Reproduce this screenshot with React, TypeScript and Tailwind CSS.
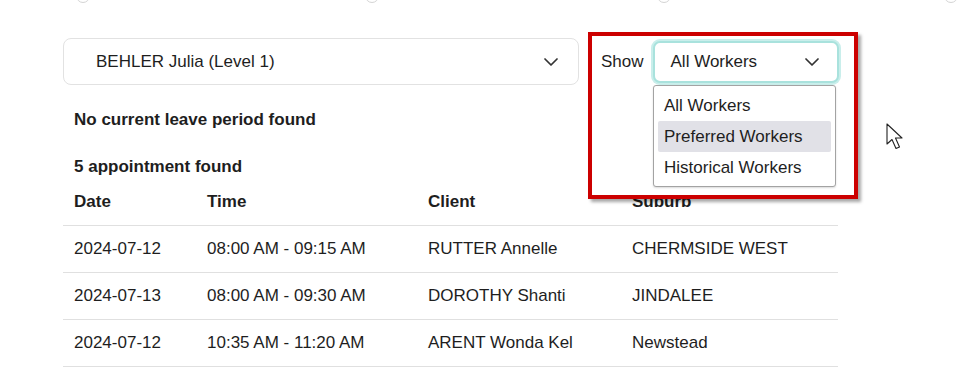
import React from "react";

const Chevron = () => (
  <svg width="14" height="8" viewBox="0 0 14 8" fill="none">
    <polyline points="1,1 7,7 13,1" stroke="#333" strokeWidth="1.7" strokeLinecap="round" strokeLinejoin="round" />
  </svg>
);

const rows = [
  ["2024-07-12", "08:00 AM - 09:15 AM", "RUTTER Annelle", "CHERMSIDE WEST"],
  ["2024-07-13", "08:00 AM - 09:30 AM", "DOROTHY Shanti", "JINDALEE"],
  ["2024-07-12", "10:35 AM - 11:20 AM", "ARENT Wonda Kel", "Newstead"],
];

export default function App() {
  return (
    <div
      className="relative w-[959px] h-[371px] bg-white overflow-hidden text-[#1e1e1e] text-[17px]"
      style={{ fontFamily: '"Liberation Sans", Arial, sans-serif' }}
    >
      {/* top cut-off controls */}
      <div className="absolute top-[-11px] left-[76px] w-[14px] h-[14px] rounded-full border border-[#d4d4d4]" />
      <div className="absolute top-[-11px] left-[365px] w-[14px] h-[14px] rounded-full border border-[#d4d4d4]" />
      <div className="absolute top-[-11px] left-[657px] w-[14px] h-[14px] rounded-full border border-[#d4d4d4]" />
      <div className="absolute top-[-11px] left-[944px] w-[14px] h-[14px] rounded-full border border-[#d4d4d4]" />

      <div className="pl-[63px] pt-[38px] w-[838px] box-content">
        <div className="flex items-center">
          <div className="w-[516px] h-[47px] border border-[#e2e2e2] rounded-[8px] flex items-center justify-between pl-[32px] pr-[20px]">
            <span className="leading-[20px]">BEHLER Julia (Level 1)</span>
            <Chevron />
          </div>
          <span className="ml-[22px] leading-[20px]">Show</span>
          <div className="ml-[9px] w-[186px] h-[42px] rounded-[7px] border-[2px] border-[#a9e2dd] ring-[2px] ring-[#c9eeeb] bg-white flex items-center justify-between pl-[16px] pr-[18px]">
            <span className="leading-[20px]">All Workers</span>
            <Chevron />
          </div>
        </div>

        <div className="mt-[25px] pl-[11px] font-bold leading-[20px]">No current leave period found</div>
        <div className="mt-[27px] pl-[11px] font-bold leading-[20px]">5 appointment found</div>

        <div className="mt-[2px] w-[775px]">
          <div className="grid grid-cols-[133px_221px_204px_217px] h-[47px] items-center border-b border-[#e0e0e0] font-bold">
            <div className="pl-[11px] leading-[20px]">Date</div>
            <div className="pl-[11px] leading-[20px]">Time</div>
            <div className="pl-[11px] leading-[20px]">Client</div>
            <div className="pl-[11px] leading-[20px]">Suburb</div>
          </div>
          {rows.map((r, i) => (
            <div key={i} className="grid grid-cols-[133px_221px_204px_217px] h-[47px] items-center border-b border-[#e0e0e0]">
              {r.map((c, j) => (
                <div key={j} className="pl-[11px] whitespace-nowrap leading-[20px]">{c}</div>
              ))}
            </div>
          ))}
        </div>
      </div>

      {/* dropdown list */}
      <div className="absolute left-[653px] top-[85px] w-[183px] h-[102px] bg-white border border-[#a3a3a3] rounded-[3px] shadow-[0_1px_2px_rgba(0,0,0,0.15)] px-[4px] py-[4px]">
        <div className="h-[31px] flex items-center pl-[6px] leading-[20px]">All Workers</div>
        <div className="h-[31px] flex items-center pl-[6px] leading-[20px] bg-[#e1e1e7] rounded-[2px]">Preferred Workers</div>
        <div className="h-[31px] flex items-center pl-[6px] leading-[20px]">Historical Workers</div>
      </div>

      {/* red annotation box */}
      <div className="absolute left-[588px] top-[32px] w-[270px] h-[167px] border-[4px] border-[#cc0000] shadow-[3px_3px_3px_rgba(0,0,0,0.35)] pointer-events-none" />

      {/* cursor */}
      <svg className="absolute left-[886px] top-[123px]" width="20" height="28" viewBox="0 0 20 28">
        <path d="M1 1 L1 21 L6 16.5 L10 25.5 L13.5 24 L9.5 15 L16 15 Z" fill="#fff" stroke="#222" strokeWidth="1.1" strokeLinejoin="round" />
      </svg>
    </div>
  );
}
